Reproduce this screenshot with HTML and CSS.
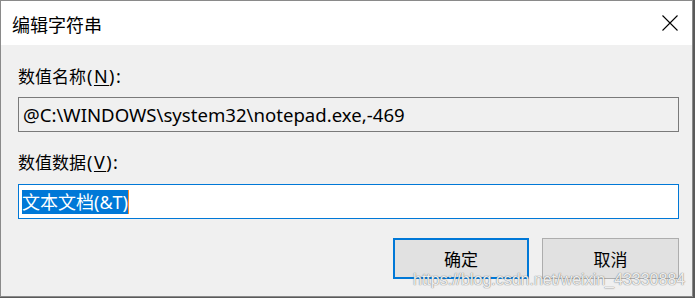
FILE: index.html
```html
<!DOCTYPE html>
<html lang="zh-CN">
<head>
<meta charset="utf-8">
<title>编辑字符串</title>
<link rel="stylesheet" href="styles.css">
</head>
<body>
<div class="window">
  <div class="titlebar">
    <span class="title">编辑字符串</span>
    <svg class="close" width="16" height="16" viewBox="0 0 16 16"><path d="M0.5 0.5 L15.5 15.5 M15.5 0.5 L0.5 15.5" stroke="#000" stroke-width="1.1" fill="none"/></svg>
  </div>
  <div class="content">
    <div class="label label-first">数值名称<span class="latin">(<u>N</u>):</span></div>
    <div class="field field-readonly">@C:\WINDOWS\system32\notepad.exe,-469</div>
    <div class="label label-second">数值数据<span class="latin">(<u>V</u>):</span></div>
    <div class="field field-active"><span class="selected">文本文档(&amp;T)</span><span class="caret"></span></div>
    <div class="buttons">
      <div class="btn btn-default">确定</div>
      <div class="btn">取消</div>
    </div>
  </div>
  <div class="watermark">https://blog.csdn.net/weixin_43330884</div>
</div>
</body>
</html>
```
FILE: styles.css
```css
html, body {
  margin: 0;
  padding: 0;
}
body {
  width: 695px;
  height: 298px;
  background: #5a5a5a;
  overflow: hidden;
  font-family: "Noto Sans", "Noto Sans CJK SC", sans-serif;
}
.window {
  position: relative;
  width: 693px;
  height: 297px;
  box-sizing: border-box;
  border: 1px solid #8a8a8a;
  background: #f0f0f0;
  display: flex;
  flex-direction: column;
}
.titlebar {
  height: 44px;
  background: #fff;
  display: flex;
  align-items: center;
  justify-content: space-between;
  padding: 0 14px 0 11px;
  flex-shrink: 0;
}
.title {
  font-family: "Noto Sans CJK SC", sans-serif;
  font-size: 18px;
  color: #000;
  line-height: 24px;
  margin-top: 1px;
}
.close {
  display: block;
}
.content {
  padding: 20px 13px 0 17px;
  display: flex;
  flex-direction: column;
}
.label {
  font-family: "Noto Sans CJK SC", sans-serif;
  font-size: 17px;
  line-height: 22px;
  height: 22px;
  color: #000;
}
.label .latin {
  font-family: "Noto Sans", sans-serif;
  font-size: 18px;
  letter-spacing: 1.5px;
  margin-left: 1px;
}
.label u {
  text-decoration-thickness: 1px;
  text-underline-offset: 2px;
}
.label-second {
  margin-top: 19px;
}
.field {
  margin-top: 10px;
  height: 35px;
  box-sizing: border-box;
  font-size: 18.6px;
  line-height: 22px;
  display: flex;
  align-items: center;
  padding-left: 4px;
}
.field-readonly {
  border: 1px solid #7a7a7a;
  background: #f0f0f0;
  color: #000;
}
.field-active {
  margin-top: 11px;
  border: 1px solid #0078d7;
  background: #fff;
  padding-left: 3px;
  font-size: 18px;
}
.selected {
  background: #0078d7;
  color: #fff;
  line-height: 24px;
}
.caret {
  display: block;
  width: 1px;
  height: 24px;
  background: #ff8a28;
}
.buttons {
  margin-top: 19px;
  display: flex;
  justify-content: flex-end;
  gap: 13px;
}
.btn {
  width: 137px;
  height: 41px;
  box-sizing: border-box;
  border: 1px solid #adadad;
  background: #e1e1e1;
  display: flex;
  align-items: center;
  justify-content: center;
  font-family: "Noto Sans CJK SC", sans-serif;
  font-size: 17px;
  color: #000;
}
.btn-default {
  border: 2px solid #0078d7;
  width: 136px;
}
.watermark {
  position: absolute;
  left: 412px;
  top: 270px;
  font-family: "Liberation Sans", Arial, sans-serif;
  font-size: 16px;
  line-height: 18px;
  color: rgba(255, 255, 255, 0.9);
  text-shadow: 0 0 1px rgba(90, 90, 90, 0.8), 0 0 1px rgba(90, 90, 90, 0.5);
  white-space: nowrap;
}
```
